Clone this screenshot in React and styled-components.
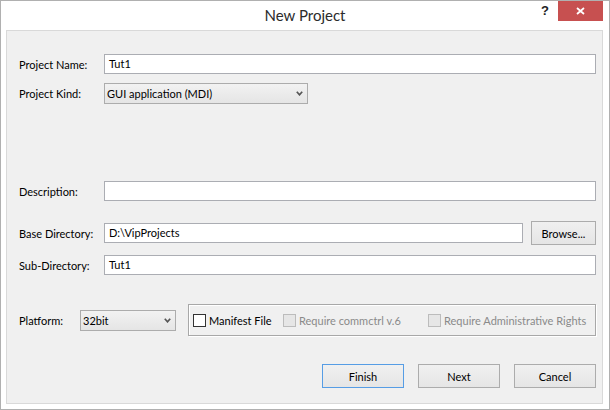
import React from 'react';
import styled, { createGlobalStyle } from 'styled-components';

const GlobalStyle = createGlobalStyle`
  html, body {
    margin: 0;
    padding: 0;
    background: #ffffff;
  }
  body {
    font-family: Lato, "Liberation Sans", sans-serif;
    font-size: 11px;
    color: #000;
  }
  * {
    box-sizing: border-box;
  }
`;

const Window = styled.div`
  width: 610px;
  height: 410px;
  border: 1px solid #b0b0b0;
  background: #ffffff;
  display: flex;
  flex-direction: column;
`;

const TitleBar = styled.header`
  height: 29px;
  display: grid;
  grid-template-columns: 1fr auto 1fr;
  align-items: start;
`;

const Title = styled.h1`
  grid-column: 2;
  margin: 0;
  font-size: 15px;
  font-weight: 400;
  line-height: 29px;
  color: #2b2b2b;
`;

const Controls = styled.div`
  grid-column: 3;
  justify-self: end;
  display: flex;
  margin-right: 6px;
`;

const HelpButton = styled.div`
  width: 26px;
  height: 20px;
  line-height: 20px;
  text-align: center;
  font-family: "Liberation Sans", sans-serif;
  font-weight: 700;
  font-size: 13px;
  color: #222;
`;

const CloseButton = styled.div`
  width: 45px;
  height: 20px;
  background: #c75050;
  display: flex;
  align-items: center;
  justify-content: center;
`;

const Panel = styled.main`
  flex: 1;
  margin: 0 6px 5px 5px;
  background: #f0f0f0;
  border: 1px solid #d9d9d9;
  padding: 0 6px 0 12px;
  display: flex;
  flex-direction: column;
`;

const Row = styled.div`
  display: grid;
  grid-template-columns: ${(p) => p.$cols || '85px 1fr'};
  column-gap: ${(p) => p.$gap || 0}px;
  align-items: center;
  margin-top: ${(p) => p.$top}px;
`;

const Label = styled.label`
  white-space: nowrap;
`;

const TextBox = styled.div`
  height: 20px;
  border: 1px solid #abadb3;
  background: #fff;
  padding: 0 4px;
  line-height: 18px;
  white-space: nowrap;
`;

const Select = styled.div`
  width: ${(p) => p.$width}px;
  height: 21px;
  border: 1px solid #acacac;
  background: linear-gradient(#f2f2f2, #e5e5e5);
  display: flex;
  align-items: center;
  justify-content: space-between;
  padding: 0 4px 0 2px;
`;

const Button = styled.div`
  width: ${(p) => p.$width || 82}px;
  height: 24px;
  border: 1px solid ${(p) => (p.$default ? '#569de5' : '#acacac')};
  background: linear-gradient(#f0f0f0, #e5e5e5);
  display: flex;
  align-items: center;
  justify-content: center;
`;

const GroupBox = styled.div`
  height: 32px;
  border: 1px solid #a8a8a8;
  box-shadow: 1px 1px 0 #ffffff, inset 1px 1px 0 #ffffff;
  display: grid;
  grid-template-columns: 90px 145px 1fr;
  align-items: center;
  padding-left: 4px;
`;

const Check = styled.div`
  display: flex;
  align-items: center;
  gap: 3px;
  white-space: nowrap;
  color: ${(p) => (p.$disabled ? '#8a8a8a' : '#000')};
`;

const Box = styled.span`
  width: 13px;
  height: 13px;
  border: 1px solid ${(p) => (p.$disabled ? '#bcbcbc' : '#333')};
  background: ${(p) => (p.$disabled ? '#e6e6e6' : '#fff')};
`;

const Footer = styled.div`
  display: flex;
  justify-content: flex-end;
  gap: 14px;
  margin-top: 28px;
`;

const Chevron = () => (
  <svg width="7" height="5" viewBox="0 0 7 5">
    <polyline points="0.8,0.8 3.5,3.8 6.2,0.8" fill="none" stroke="#555" strokeWidth="1.7" />
  </svg>
);

const CloseIcon = () => (
  <svg width="9" height="8" viewBox="0 0 9 8">
    <path d="M1 1 L8 7 M8 1 L1 7" stroke="#fff" strokeWidth="1.8" />
  </svg>
);

const App = () => (
  <>
    <GlobalStyle />
    <Window>
      <TitleBar>
        <Title>New Project</Title>
        <Controls>
          <HelpButton>?</HelpButton>
          <CloseButton>
            <CloseIcon />
          </CloseButton>
        </Controls>
      </TitleBar>
      <Panel>
        <Row $top={23}>
          <Label>Project Name:</Label>
          <TextBox>Tut1</TextBox>
        </Row>
        <Row $top={9}>
          <Label>Project Kind:</Label>
          <Select $width={204}>
            <span>GUI application (MDI)</span>
            <Chevron />
          </Select>
        </Row>
        <Row $top={77}>
          <Label>Description:</Label>
          <TextBox />
        </Row>
        <Row $top={20} $cols="77px 1fr 65px" $gap={8}>
          <Label>Base Directory:</Label>
          <TextBox>D:\VipProjects</TextBox>
          <Button $width={65}>Browse...</Button>
        </Row>
        <Row $top={10}>
          <Label>Sub-Directory:</Label>
          <TextBox>Tut1</TextBox>
        </Row>
        <Row $top={29} $cols="49px 96px 1fr" $gap={12}>
          <Label>Platform:</Label>
          <Select $width={96}>
            <span>32bit</span>
            <Chevron />
          </Select>
          <GroupBox>
            <Check>
              <Box />
              Manifest File
            </Check>
            <Check $disabled>
              <Box $disabled />
              Require commctrl v.6
            </Check>
            <Check $disabled>
              <Box $disabled />
              Require Administrative Rights
            </Check>
          </GroupBox>
        </Row>
        <Footer>
          <Button $default>Finish</Button>
          <Button>Next</Button>
          <Button>Cancel</Button>
        </Footer>
      </Panel>
    </Window>
  </>
);

export default App;
